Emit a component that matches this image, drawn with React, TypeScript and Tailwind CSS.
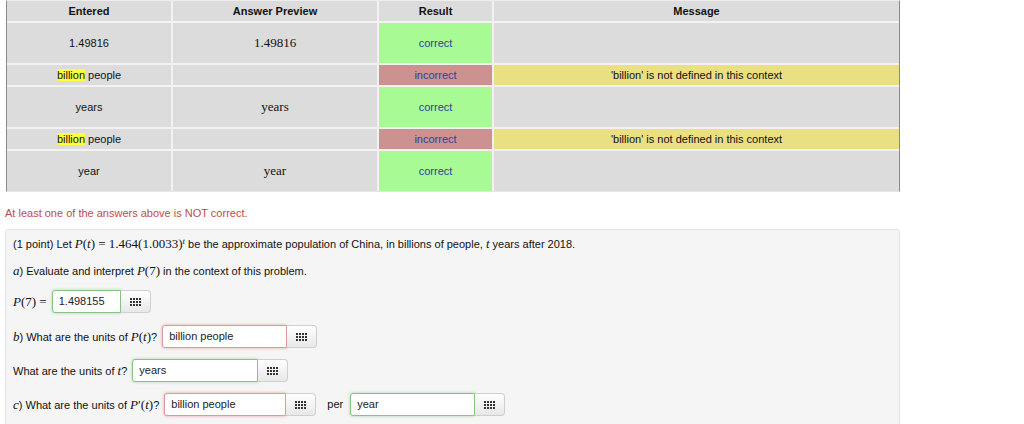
import React from "react";

const sans = { fontFamily: '"Liberation Sans", Arial, sans-serif' };

function GridIcon() {
  return (
    <svg width="11" height="8" viewBox="0 0 11 8" className="block">
      {[0, 3, 6].map((y) =>
        [0, 3, 6, 9].map((x) => (
          <rect key={`${x}-${y}`} x={x} y={y} width="2" height="2" fill="#333" />
        ))
      )}
    </svg>
  );
}

function Ans({ value, ok, w }: { value: string; ok: boolean; w: string }) {
  return (
    <div className="flex items-stretch h-[23px]">
      <div
        className={`${w} flex items-center px-[6px] bg-white text-[11px] text-[#222] rounded-l-[3px] border ${
          ok
            ? "border-[#86c486] shadow-[0_0_3px_rgba(92,184,92,0.5)]"
            : "border-[#dc9a9a] shadow-[0_0_3px_rgba(217,83,79,0.5)]"
        }`}
      >
        {value}
      </div>
      <div className="w-[30px] flex items-center justify-center border border-l-0 border-[#cfcfcf] rounded-r-[4px] bg-gradient-to-b from-white to-[#e8e8e8]">
        <GridIcon />
      </div>
    </div>
  );
}

const M = ({ children }: { children: React.ReactNode }) => (
  <span className="italic text-[13px]" style={{ fontFamily: '"Liberation Serif", "Times New Roman", serif' }}>
    {children}
  </span>
);
const N = ({ children }: { children: React.ReactNode }) => (
  <span className="text-[13px]" style={{ fontFamily: '"Liberation Serif", "Times New Roman", serif' }}>
    {children}
  </span>
);

type Row = {
  entered: React.ReactNode;
  preview: string;
  ok: boolean;
  msg: string;
};

const Billion = () => (
  <span>
    <span className="bg-[#ffff40]">billion</span> people
  </span>
);

const rows: Row[] = [
  { entered: "1.49816", preview: "1.49816", ok: true, msg: "" },
  { entered: <Billion />, preview: "", ok: false, msg: "'billion' is not defined in this context" },
  { entered: "years", preview: "years", ok: true, msg: "" },
  { entered: <Billion />, preview: "", ok: false, msg: "'billion' is not defined in this context" },
  { entered: "year", preview: "year", ok: true, msg: "" },
];

export default function App() {
  return (
    <div className="w-[1024px] h-[424px] bg-white overflow-hidden text-[11px] text-[#111]" style={sans}>
      <div className="pl-[6px]">
        <div className="w-[894px] border-l border-r border-t border-b border-l-[#8a8a8a] border-r-[#8a8a8a] border-t-[#eeeeee] border-b-[#e6e6e6] bg-[#f2f2f2]">
          <div className="grid grid-cols-[164px_204px_113px_405px] gap-[2px]">
            {["Entered", "Answer Preview", "Result", "Message"].map((h) => (
              <div key={h} className="h-[20px] pt-[1px] bg-[#dcdcdc] flex items-center justify-center font-bold">
                {h}
              </div>
            ))}
            {rows.map((r, i) => {
              const tall = r.ok;
              const h = tall ? "h-[40px]" : "h-[20px]";
              return (
                <React.Fragment key={i}>
                  <div className={`${h} bg-[#dcdcdc] flex items-center justify-center`}>{r.entered}</div>
                  <div className={`${h} bg-[#dcdcdc] flex items-center justify-center`}>
                    {r.preview && <N>{r.preview}</N>}
                  </div>
                  <div
                    className={`${h} flex items-center justify-center text-[#2b3f9c] ${
                      r.ok ? "bg-[#a8fa94]" : "bg-[#cc9290]"
                    }`}
                  >
                    {r.ok ? "correct" : "incorrect"}
                  </div>
                  <div
                    className={`${h} flex items-center justify-center ${
                      r.msg ? "bg-[#ebdf84]" : "bg-[#dcdcdc]"
                    }`}
                  >
                    {r.msg}
                  </div>
                </React.Fragment>
              );
            })}
          </div>
        </div>
      </div>

      <div className="pl-[5px] mt-[14px] text-[#c24a48] h-[14px] leading-[14px]">
        At least one of the answers above is NOT correct.
      </div>

      <div className="ml-[5px] mt-[9px] w-[895px] h-[300px] bg-[#f5f5f5] border border-[#e3e3e3] rounded-[3px] px-[7px] pt-[7px]">
        <div className="h-[14px] leading-[14px] flex items-baseline">
          <span>
            (1 point) Let <M>P</M>
            <N>(</N>
            <M>t</M>
            <N>) = 1.464(1.0033)</N>
            <sup className="text-[9px] italic" style={{ fontFamily: '"Liberation Serif", serif' }}>t</sup> be the approximate
            population of China, in billions of people, <M>t</M> years after 2018.
          </span>
        </div>
        <div className="mt-[13px] h-[14px] leading-[14px]">
          <M>a</M>) Evaluate and interpret <M>P</M>
          <N>(7)</N> in the context of this problem.
        </div>
        <div className="mt-[12px] flex items-center gap-[5px]">
          <span>
            <M>P</M>
            <N>(7) = </N>
          </span>
          <Ans value="1.498155" ok={true} w="w-[69px]" />
        </div>
        <div className="mt-[12px] flex items-center gap-[5px]">
          <span>
            <M>b</M>) What are the units of <M>P</M>
            <N>(</N>
            <M>t</M>
            <N>)</N>?
          </span>
          <Ans value="billion people" ok={false} w="w-[125px]" />
        </div>
        <div className="mt-[11px] flex items-center gap-[5px]">
          <span>
            What are the units of <M>t</M>?
          </span>
          <Ans value="years" ok={true} w="w-[126px]" />
        </div>
        <div className="mt-[11px] flex items-center gap-[5px]">
          <span>
            <M>c</M>) What are the units of <M>P</M>
            <N>′</N>
            <N>(</N>
            <M>t</M>
            <N>)</N>?
          </span>
          <Ans value="billion people" ok={false} w="w-[122px]" />
          <span className="ml-[6px] mr-[2px]">per</span>
          <Ans value="year" ok={true} w="w-[125px]" />
        </div>
      </div>
    </div>
  );
}
